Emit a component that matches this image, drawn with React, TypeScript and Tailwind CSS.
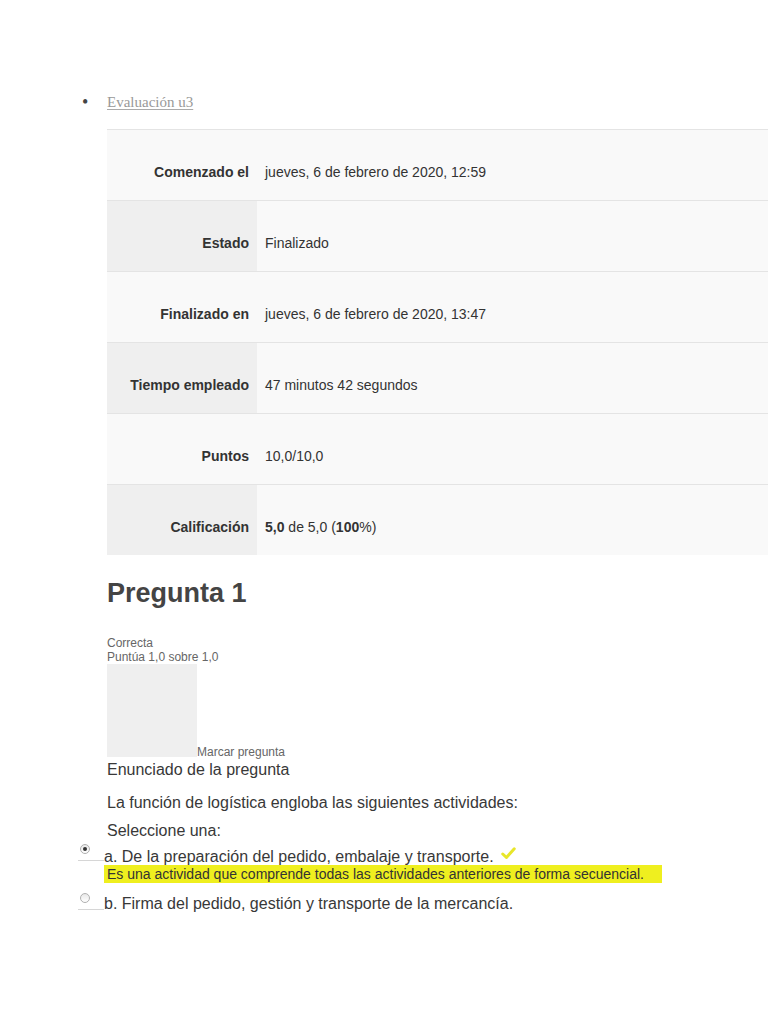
import React from 'react'

const rows: { label: string; value: React.ReactNode; shade: boolean }[] = [
  { label: 'Comenzado el', value: 'jueves, 6 de febrero de 2020, 12:59', shade: false },
  { label: 'Estado', value: 'Finalizado', shade: true },
  { label: 'Finalizado en', value: 'jueves, 6 de febrero de 2020, 13:47', shade: false },
  { label: 'Tiempo empleado', value: '47 minutos 42 segundos', shade: true },
  { label: 'Puntos', value: '10,0/10,0', shade: false },
  {
    label: 'Calificación',
    value: (
      <>
        <b>5,0</b> de 5,0 (<b>100</b>%)
      </>
    ),
    shade: true,
  },
]

const Radio: React.FC<{ checked?: boolean }> = ({ checked }) => (
  <span className="relative w-[26px] h-[17px] shrink-0 border-b border-[#d6d6d6]">
    <span className="absolute left-[2px] top-[0px] w-[10px] h-[10px] rounded-full border border-[#b0b0b0] bg-gradient-to-b from-[#e8e8e8] to-white flex items-center justify-center">
      {checked && <span className="w-[4px] h-[4px] rounded-full bg-[#333]" />}
    </span>
  </span>
)

const App: React.FC = () => {
  return (
    <div className="w-[768px] h-[1024px] overflow-hidden bg-white text-[#333] font-['Liberation_Sans',Arial,sans-serif]">
      {/* Breadcrumb */}
      <div className="pt-[92px] pl-[82px] flex items-center font-['Liberation_Serif','Times_New_Roman',serif]">
        <span className="text-[18px] text-[#444] w-[25px] leading-[20px]">•</span>
        <span className="text-[15px] leading-[20px] text-[#999] underline decoration-[#aaa] underline-offset-2">
          Evaluación u3
        </span>
      </div>

      {/* Summary table */}
      <div className="ml-[107px] mt-[17px] w-[720px] text-[14px]">
        {rows.map((r) => (
          <div key={r.label} className="flex h-[71px] border-t border-[#e4e4e4] bg-[#f9f9f9]">
            <div
              className={`w-[150px] shrink-0 text-right pr-[8px] pt-[32px] leading-[20px] font-bold text-[#333] ${
                r.shade ? 'bg-[#efefef]' : 'bg-[#f9f9f9]'
              }`}
            >
              {r.label}
            </div>
            <div className="pl-[8px] pt-[32px] leading-[20px] text-[#333]">{r.value}</div>
          </div>
        ))}
      </div>

      {/* Question */}
      <div className="ml-[107px]">
        <h2 className="mt-[20px] text-[27px] leading-[36px] font-bold text-[#444]">Pregunta 1</h2>
        <div className="mt-[25px] text-[12px] leading-[14px] text-[#666]">
          <div>Correcta</div>
          <div>Puntúa 1,0 sobre 1,0</div>
          <div className="flex items-end">
            <div className="w-[90px] h-[93px] bg-[#efefef]" />
            <span className="leading-[12px] mb-[-1px]">Marcar pregunta</span>
          </div>
        </div>
        <div className="mt-[2px] text-[16px] leading-[22px] text-[#383838]">Enunciado de la pregunta</div>
        <p className="mt-[11px] text-[16px] leading-[22px] text-[#383838]">
          La función de logística engloba las siguientes actividades:
        </p>
        <p className="mt-[6px] text-[16px] leading-[22px] text-[#383838]">Seleccione una:</p>
      </div>

      <div className="ml-[78px] mt-[2px] text-[#383838]">
        <div className="flex items-start">
          <Radio checked />
          <span className="text-[16px] leading-[18px] mt-[4px]">
            a. De la preparación del pedido, embalaje y transporte.
          </span>
          <svg viewBox="0 0 16 14" className="w-[15px] h-[13px] ml-[7px] mt-[3px]">
            <path
              d="M1.8 7.5 L5.8 11.3 L14.2 2"
              fill="none"
              stroke="#e8e62a"
              strokeWidth="3.2"
              strokeLinecap="round"
              strokeLinejoin="round"
            />
          </svg>
        </div>
        <div className="ml-[26px] mt-[-1px] w-fit bg-[#efef1f] pl-[3px] pr-[18px] text-[14px] leading-[18px] text-[#333]">
          Es una actividad que comprende todas las actividades anteriores de forma secuencial.
        </div>
        <div className="flex items-start mt-[10px]">
          <Radio />
          <span className="text-[16px] leading-[18px] mt-[2px]">
            b. Firma del pedido, gestión y transporte de la mercancía.
          </span>
        </div>
      </div>
    </div>
  )
}

export default App
